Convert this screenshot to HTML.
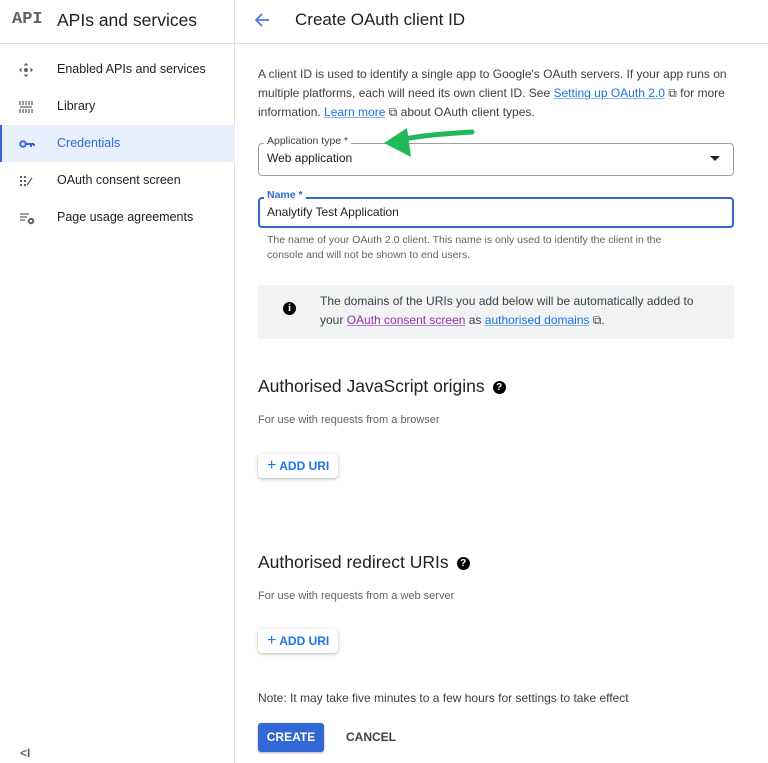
<!DOCTYPE html>
<html><head><meta charset="utf-8"><style>
*{margin:0;padding:0;box-sizing:border-box}
body{width:768px;height:763px;overflow:hidden;background:#fff;font-family:"Liberation Sans",sans-serif;color:#202124;position:relative}
.a{position:absolute}
.side{left:0;top:0;width:235px;height:763px;border-right:1px solid #e0e0e0}
.hline{left:0;top:43px;width:768px;height:1px;background:#e0e0e0}
.nav{position:absolute;left:0;width:235px;height:37px;font-size:12.5px;line-height:37px;padding-left:57px;color:#202124}
.nav svg{position:absolute;left:19px;top:12px}
.sel{background:#e8f0fe;color:#3367d6;border-left:2px solid #3367d6}
.t{font-size:12px;line-height:19px;color:#3c4043}
a{color:#1a73e8;text-decoration:underline;text-decoration-color:#8ab4f8}
.btn{border-radius:4px;box-shadow:0 1px 3px rgba(0,0,0,.3);font-size:12px;font-weight:bold;color:#1a73e8;background:#fff;height:24px;line-height:24px;padding:0 9px}
.h{font-size:17.5px;color:#202124}
.q{display:inline-block;width:13px;height:13px;border-radius:50%;background:#000;color:#fff;font-size:10px;line-height:13px;text-align:center;font-weight:bold;vertical-align:2px;margin-left:8px}
.sub{font-size:11px;color:#5f6368}
</style></head><body>
<div class="a side"></div>
<div class="a hline"></div>
<div class="a" style="left:12px;top:10px;font-family:'Liberation Mono',monospace;font-weight:bold;font-size:17px;color:#5f6368">API</div>
<div class="a" style="left:57px;top:10px;font-size:17.5px;color:#202124">APIs and services</div>
<div class="nav" style="top:51px"><svg width="14" height="14" viewBox="0 0 14 14" fill="#5f6368"><path d="M7 0l2.5 2.5h-5zM7 14l2.5-2.5h-5zM0 7l2.5-2.5v5zM14 7l-2.5-2.5v5z"/><circle cx="7" cy="7" r="2"/></svg>Enabled APIs and services</div>
<div class="nav" style="top:88px"><svg width="14" height="14" viewBox="0 0 14 14" stroke="#5f6368" stroke-width="1.3" fill="none"><path d="M1 1v4M4 1v4M7 1v4M10 1v4M13 1v4M1 7h12M1 9v4M4 9v4M7 9v4M10 9v4M13 9v4"/></svg>Library</div>
<div class="nav sel" style="top:125px;padding-left:55px"><svg style="left:17px" width="16" height="14" viewBox="0 0 16 14" fill="none" stroke="#3367d6" stroke-width="2"><circle cx="4" cy="7" r="2.8"/><path d="M7 7h8M12 7v3M15 7v2"/></svg>Credentials</div>
<div class="nav" style="top:162px"><svg width="14" height="14" viewBox="0 0 14 14" fill="#5f6368"><rect x="1" y="2" width="2" height="2"/><rect x="5" y="2" width="2" height="2"/><rect x="1" y="6" width="2" height="2"/><rect x="5" y="6" width="2" height="2"/><rect x="1" y="10" width="2" height="2"/><rect x="5" y="10" width="2" height="2"/><path d="M8 11l5-7" stroke="#5f6368" stroke-width="1.3"/></svg>OAuth consent screen</div>
<div class="nav" style="top:199px"><svg width="16" height="14" viewBox="0 0 16 14" stroke="#5f6368" stroke-width="1.3" fill="none"><path d="M1 3h9M1 6h7M1 9h5"/><circle cx="12" cy="10" r="2.2" stroke-width="2"/></svg>Page usage agreements</div>
<div class="a" style="left:20px;top:746px;font-size:12px;color:#5f6368;font-weight:bold">&lt;I</div>

<svg class="a" style="left:253px;top:12px" width="18" height="16"><path d="M16 8H3M9 2L3 8l6 6" stroke="#4a7bd6" stroke-width="1.8" fill="none"/></svg>
<div class="a" style="left:295px;top:10px;font-size:17px;color:#202124">Create OAuth client ID</div>

<div class="a t" style="left:258px;top:65px;width:480px">A client ID is used to identify a single app to Google's OAuth servers. If your app runs on multiple platforms, each will need its own client ID. See <a>Setting up OAuth 2.0</a> ⧉ for more information. <a>Learn more</a> ⧉ about OAuth client types.</div>

<div class="a" style="left:258px;top:143px;width:476px;height:33px;border:1px solid #9aa0a6;border-radius:4px"></div>
<div class="a" style="left:264px;top:135px;background:#fff;padding:0 3px;font-size:10.5px;color:#3c4043">Application type *</div>
<div class="a" style="left:267px;top:151px;font-size:12px">Web application</div>
<div class="a" style="left:710px;top:156px;width:0;height:0;border-left:5px solid transparent;border-right:5px solid transparent;border-top:5px solid #202124"></div>
<svg class="a" style="left:380px;top:124px" width="100" height="40"><path d="M92 8 C60 10 35 12 16 17" stroke="#1fb95a" stroke-width="5" fill="none" stroke-linecap="round"/><path d="M4 19 L27 4 L31 33 Z" fill="#1fb95a"/></svg>

<div class="a" style="left:258px;top:197px;width:476px;height:31px;border:2px solid #3367d6;border-radius:4px"></div>
<div class="a" style="left:264px;top:189px;background:#fff;padding:0 3px;font-size:10.5px;color:#3367d6;font-weight:bold">Name *</div>
<div class="a" style="left:267px;top:205px;font-size:12px">Analytify Test Application</div>
<div class="a" style="left:267px;top:233px;width:425px;font-size:10.5px;line-height:15px;color:#5f6368">The name of your OAuth 2.0 client. This name is only used to identify the client in the console and will not be shown to end users.</div>

<div class="a" style="left:258px;top:285px;width:476px;height:54px;background:#f1f3f4;border-radius:3px"></div>
<div class="a" style="left:283px;top:302px;width:13px;height:13px;border-radius:50%;background:#000;color:#fff;font-size:10px;line-height:13px;text-align:center;font-weight:bold;font-family:'Liberation Serif',serif">i</div>
<div class="a t" style="left:320px;top:292px;width:400px;line-height:19px">The domains of the URIs you add below will be automatically added to your <a style="color:#9334a8;text-decoration-color:#c57dd2">OAuth consent screen</a> as <a>authorised domains</a> ⧉.</div>

<div class="a h" style="left:258px;top:376px">Authorised JavaScript origins<span class="q">?</span></div>
<div class="a sub" style="left:258px;top:414px">For use with requests from a browser</div>
<div class="a btn" style="left:258px;top:454px"><span style="font-size:16px;font-weight:normal">+</span> ADD URI</div>

<div class="a h" style="left:258px;top:552px">Authorised redirect URIs<span class="q">?</span></div>
<div class="a sub" style="left:258px;top:590px">For use with requests from a web server</div>
<div class="a btn" style="left:258px;top:629px"><span style="font-size:16px;font-weight:normal">+</span> ADD URI</div>

<div class="a" style="left:258px;top:691px;font-size:12px;color:#3c4043">Note: It may take five minutes to a few hours for settings to take effect</div>
<div class="a" style="left:258px;top:723px;width:66px;height:29px;background:#3367d6;border-radius:3px;color:#fff;font-size:12px;font-weight:bold;text-align:center;line-height:29px;box-shadow:0 1px 2px rgba(0,0,0,.3)">CREATE</div>
<div class="a" style="left:346px;top:723px;line-height:29px;font-size:12px;font-weight:bold;color:#3c4043">CANCEL</div>
</body></html>
